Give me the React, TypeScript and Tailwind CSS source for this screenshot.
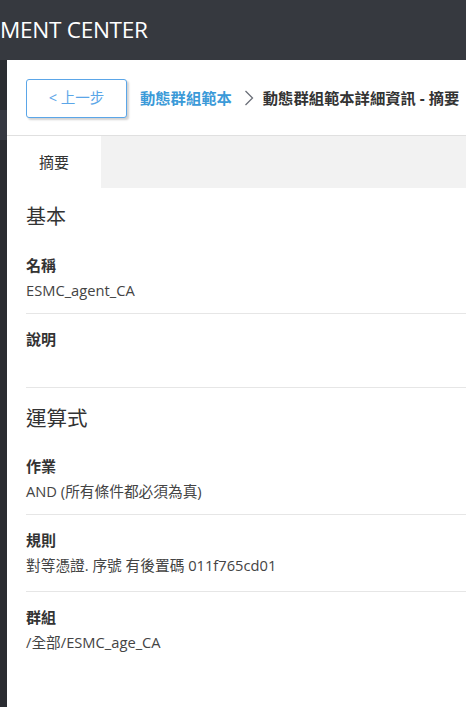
import React from 'react';

const font = { fontFamily: '"Open Sans", "Noto Sans CJK TC", sans-serif' };

type FieldProps = { label: string; value?: string; last?: boolean; extra?: boolean };

const Field: React.FC<FieldProps> = ({ label, value, last, extra }) => (
  <div className={`pt-[16px] ${last ? '' : 'border-b border-[#e6e6e6]'} ${extra ? 'pb-[15px]' : 'pb-[12px]'}`}>
    <div className="h-[18px] text-[15px] leading-[18px] font-bold text-[#333]">{label}</div>
    <div className="mt-[5px] h-[22px] text-[14.7px] leading-[22px] text-[#444] whitespace-nowrap">{value}</div>
  </div>
);

const App: React.FC = () => {
  return (
    <div className="w-[466px] h-[709px] overflow-hidden bg-white" style={font}>
      {/* Header */}
      <header className="h-[60px] bg-[#36393f] flex items-center">
        <span className="ml-0 text-white text-[22.6px] tracking-[-0.3px] leading-none">
          MENT CENTER
        </span>
      </header>

      <div className="flex h-[649px]">
        {/* Side strip */}
        <div className="w-[7px] flex flex-col">
          <div className="h-[50px] bg-[#2b2d32]" />
          <div className="h-[30px] bg-[#363942]" />
          <div className="flex-1 bg-[#2a2c31]" />
          <div className="h-[2px] bg-white" />
        </div>

        {/* Content */}
        <div className="flex-1 min-w-0">
          {/* Breadcrumb */}
          <div className="h-[76px] border-b border-[#e0e0e0] flex items-center pl-[19px] pt-[1px]">
            <button className="w-[101px] h-[39px] shrink-0 border border-[#5ba6e8] rounded-[3px] bg-white text-[#5ba6e8] text-[14.5px] shadow-[2px_2px_2px_rgba(0,0,0,0.18)] flex items-center justify-center">
              &lt; 上一步
            </button>
            <span className="ml-[13px] text-[15.3px] font-bold text-[#3b9ad8] whitespace-nowrap">動態群組範本</span>
            <svg className="ml-[12px] shrink-0" width="10" height="18" viewBox="0 0 10 18">
              <polyline points="1.5,2 8.5,9 1.5,16" fill="none" stroke="#6b6f78" strokeWidth="1.3" />
            </svg>
            <span className="ml-[9px] text-[15.3px] font-bold text-[#333] whitespace-nowrap">
              動態群組範本詳細資訊 - 摘要
            </span>
          </div>

          {/* Tabs */}
          <div className="h-[52px] bg-[#f2f2f2] flex">
            <div className="w-[94px] bg-white flex items-center justify-center text-[15px] text-[#333]">
              摘要
            </div>
          </div>

          {/* Body */}
          <div className="pl-[19px]">
            <h2 className="pt-[16px] h-[42px] text-[20px] leading-[26px] text-[#333]">基本</h2>
            <div className="pt-[10px]">
              <Field label="名稱" value="ESMC_agent_CA" />
              <Field label="說明" />
            </div>

            <h2 className="pt-[17px] h-[43px] text-[20.5px] leading-[26px] text-[#333]">運算式</h2>
            <div className="pt-[10px]">
              <Field label="作業" value="AND (所有條件都必須為真)" />
              <Field label="規則" value="對等憑證. 序號 有後置碼 011f765cd01" extra />
              <Field label="群組" value="/全部/ESMC_age_CA" last />
            </div>
          </div>
        </div>
      </div>
    </div>
  );
};

export default App;
